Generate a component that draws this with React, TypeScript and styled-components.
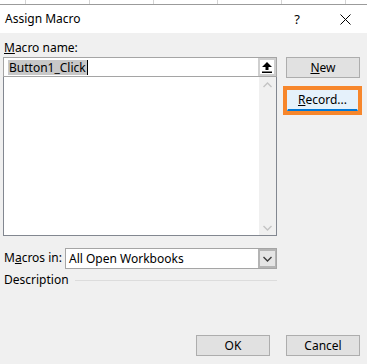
import React from 'react'
import styled, { createGlobalStyle } from 'styled-components'

const GlobalStyle = createGlobalStyle`
    html, body {
        margin: 0;
        padding: 0;
        background: #f0f0f0;
    }
    body {
        font-family: 'Noto Sans', 'Open Sans', sans-serif;
        font-size: 12px;
        color: #000;
    }
`

const Page = styled.div`
    display: flex;
    flex-direction: column;
    width: 367px;
    height: 364px;
    overflow: hidden;
`

// spreadsheet grid peeking out behind the dialog
const SheetStrip = styled.div`
    height: 4px;
    border-bottom: 1px solid #9b9b9b;
    background-color: #fff;
    background-image: repeating-linear-gradient(
        to right,
        transparent 0 25px,
        #d4d4d4 25px 26px,
        transparent 26px 64px
    );
`

const TitleBar = styled.div`
    display: flex;
    align-items: center;
    height: 28px;
    background: #fff;
    padding-left: 5px;
`

const Title = styled.div`
    flex: 1;
    font-size: 12px;
    line-height: 16px;
`

const TitleButton = styled.div<{ $w: number }>`
    width: ${(p) => p.$w}px;
    height: 28px;
    display: flex;
    align-items: center;
    justify-content: center;
    font-size: 13px;
`

const Body = styled.div`
    flex: 1;
    display: flex;
    flex-direction: column;
    padding: 7px 7px 8px 3px;
`

const Columns = styled.div`
    display: grid;
    grid-template-columns: 274px 74px;
    column-gap: 9px;
`

const LeftCol = styled.div`
    display: flex;
    flex-direction: column;
`

const RightCol = styled.div`
    display: flex;
    flex-direction: column;
    padding-top: 17px;
    gap: 8px;
`

const Label = styled.div<{ $pad?: number }>`
    height: 17px;
    line-height: 16px;
    padding-left: ${(p) => p.$pad ?? 1}px;
    white-space: nowrap;
`

const NameBox = styled.div`
    display: flex;
    align-items: center;
    height: 20px;
    box-sizing: border-box;
    border: 1px solid #a5a5a5;
    background: #fff;
    padding-left: 4px;
`

const Selected = styled.span`
    background: #c8c8c8;
    line-height: 15px;
    padding: 0 1px;
`

const Caret = styled.span`
    display: inline-block;
    width: 1px;
    height: 15px;
    background: #000;
`

const UploadBtn = styled.div`
    margin-left: auto;
    width: 18px;
    height: 18px;
    box-sizing: border-box;
    border: 2px solid #cfcfcf;
    background: #fff;
    display: flex;
    align-items: center;
    justify-content: center;
`

const ListBox = styled.div`
    display: flex;
    height: 159px;
    box-sizing: border-box;
    border: 1px solid #828790;
    border-top: none;
    background: #fff;
`

const ListItems = styled.div`
    flex: 1;
`

const ScrollBar = styled.div`
    width: 17px;
    background: #f0f0f0;
    display: flex;
    flex-direction: column;
    justify-content: space-between;
    align-items: center;
    padding: 5px 0 4px;
`

const MacrosRow = styled.div`
    display: flex;
    align-items: center;
    margin-top: 12px;
    height: 21px;
`

const Select = styled.div`
    margin-left: auto;
    width: 212px;
    height: 21px;
    box-sizing: border-box;
    border: 1px solid #a5a5a5;
    background: #fff;
    display: flex;
    align-items: center;
    padding-left: 3px;
`

const DropBtn = styled.div`
    margin-left: auto;
    width: 18px;
    height: 19px;
    box-sizing: border-box;
    border: 2px solid #b4b4b4;
    border-right-width: 1px;
    background: #e5e5e5;
    display: flex;
    align-items: center;
    justify-content: center;
`

const DescRow = styled.div`
    display: flex;
    align-items: center;
    gap: 6px;
    margin-top: 2px;
    height: 18px;
`

const Rule = styled.div`
    flex: 1;
    height: 1px;
    background: #dcdcdc;
`

const Button = styled.button<{ $focused?: boolean }>`
    width: ${(p) => (p.$focused ? 71 : 74)}px;
    height: 21px;
    box-sizing: border-box;
    font-family: inherit;
    font-size: 12px;
    color: #000;
    padding: 0;
    line-height: 16px;
    background: ${(p) => (p.$focused ? '#e5f1fb' : '#e1e1e1')};
    border: 1px solid ${(p) => (p.$focused ? '#e5f1fb' : '#adadad')};
    border-bottom: ${(p) => (p.$focused ? '2px solid #0078d7' : '1px solid #adadad')};
`

const Highlight = styled.div`
    width: 79px;
    margin-left: -3px;
    box-sizing: border-box;
    border: 4px solid #f7862b;
    display: flex;
`

const Footer = styled.div`
    margin-top: auto;
    display: flex;
    justify-content: flex-end;
    gap: 16px;
`

const Key = styled.span`
    text-decoration: underline;
    text-underline-offset: 1px;
`

const Chevron = ({ up, color }: { up?: boolean; color: string }) => (
    <svg width="9" height="6" viewBox="0 0 9 6">
        <polyline
            points={up ? '0.5,5 4.5,1 8.5,5' : '0.5,1 4.5,5 8.5,1'}
            fill="none"
            stroke={color}
            strokeWidth="1.4"
        />
    </svg>
)

const App: React.FC = () => {
    return (
        <Page>
            <GlobalStyle />
            <SheetStrip />
            <TitleBar>
                <Title>Assign Macro</Title>
                <TitleButton $w={52}>?</TitleButton>
                <TitleButton $w={44}>
                    <svg width="11" height="11" viewBox="0 0 11 11">
                        <path d="M0.5 0.5 L10.5 10.5 M10.5 0.5 L0.5 10.5" stroke="#000" strokeWidth="1" />
                    </svg>
                </TitleButton>
            </TitleBar>
            <Body>
                <Columns>
                    <LeftCol>
                        <Label>
                            <Key>M</Key>acro name:
                        </Label>
                        <NameBox>
                            <Selected>Button1_Click</Selected>
                            <Caret />
                            <UploadBtn>
                                <svg width="10" height="11" viewBox="0 0 10 11">
                                    <path d="M5 0 L10 5 L6.5 5 L6.5 8 L3.5 8 L3.5 5 L0 5 Z" fill="#000" />
                                    <rect x="0" y="9.5" width="10" height="1.5" fill="#000" />
                                </svg>
                            </UploadBtn>
                        </NameBox>
                        <ListBox>
                            <ListItems />
                            <ScrollBar>
                                <Chevron up color="#c4c4c4" />
                                <Chevron color="#c4c4c4" />
                            </ScrollBar>
                        </ListBox>
                        <MacrosRow>
                            <Label $pad={1}>
                                M<Key>a</Key>cros in:
                            </Label>
                            <Select>
                                All Open Workbooks
                                <DropBtn>
                                    <Chevron color="#3c3c3c" />
                                </DropBtn>
                            </Select>
                        </MacrosRow>
                        <DescRow>
                            <Label>Description</Label>
                            <Rule />
                        </DescRow>
                    </LeftCol>
                    <RightCol>
                        <Button>
                            <Key>N</Key>ew
                        </Button>
                        <Highlight>
                            <Button $focused>
                                <Key>R</Key>ecord...
                            </Button>
                        </Highlight>
                    </RightCol>
                </Columns>
                <Footer>
                    <Button>OK</Button>
                    <Button>Cancel</Button>
                </Footer>
            </Body>
        </Page>
    )
}

export default App
